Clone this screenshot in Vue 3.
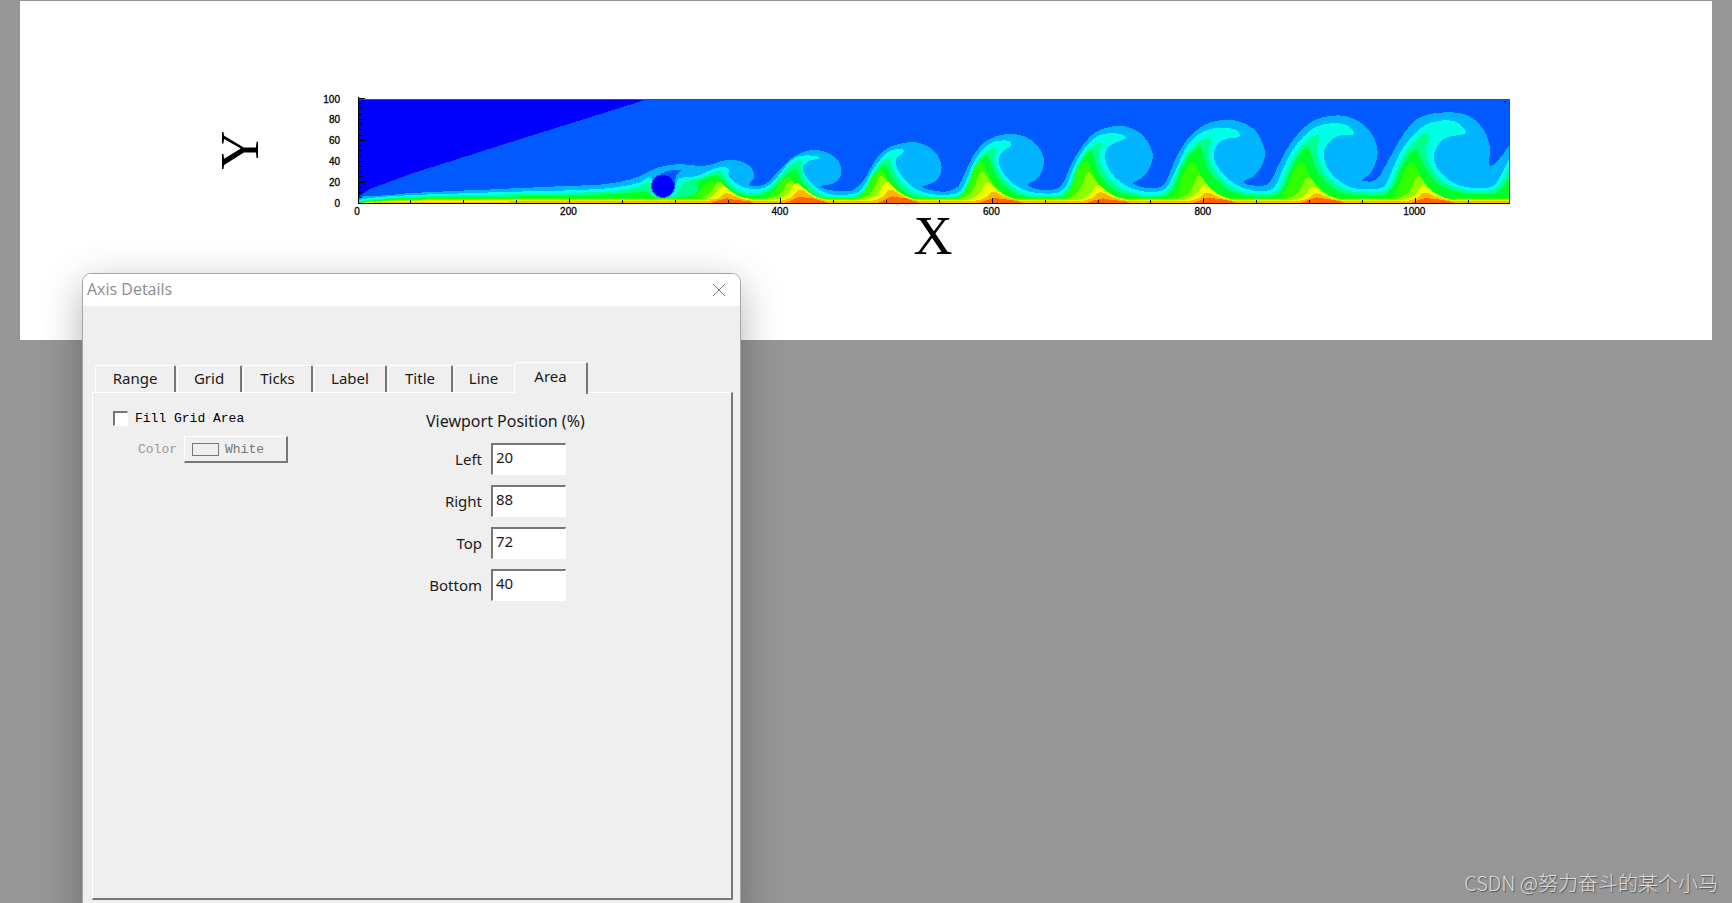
<script setup>
import { ref } from 'vue'

const tabs = ['Range', 'Grid', 'Ticks', 'Label', 'Title', 'Line', 'Area']
const active = ref('Area')
const fillArea = ref(false)
const fields = ref([
  { id: 'left', label: 'Left', value: '20' },
  { id: 'right', label: 'Right', value: '88' },
  { id: 'top', label: 'Top', value: '72' },
  { id: 'bottom', label: 'Bottom', value: '40' }
])

// Axis scales
const X0 = 358
const Y0 = 203
const sx = v => X0 + v * 1.0573
const sy = v => Y0 - v * 1.045
const xLabels = [0, 200, 400, 600, 800, 1000]
const yLabels = [0, 20, 40, 60, 80, 100]
const xTicks = Array.from({ length: 21 }, (_, i) => (i + 1) * 50)
const yTicks = Array.from({ length: 20 }, (_, i) => (i + 1) * 5)

// Contour points are stored in thirds of a unit, in four tiles along the channel
const origin = [600, 1590, 2550, 3540]
const pts = tiles => tiles.flatMap((t, i) => {
  const out = []
  for (let k = 0; k < t.length; k += 2) out.push([(origin[i] + t[k]) / 3, (240 + t[k + 1]) / 3])
  return out
})
const smooth = p => {
  let d = `M${p[0][0]} ${p[0][1]}`
  for (let i = 0; i < p.length - 1; i++) {
    const a = p[i - 1] || p[i], b = p[i], c = p[i + 1], e = p[i + 2] || c
    d += `C${b[0] + (c[0] - a[0]) / 6} ${b[1] + (c[1] - a[1]) / 6} ${c[0] - (e[0] - b[0]) / 6} ${c[1] - (e[1] - b[1]) / 6} ${c[0]} ${c[1]}`
  }
  return d
}
const layer = tiles => smooth(pts(tiles)) + 'V203H358Z'

const contours = [
  { color: '#00b4ff', d: layer([
    [477,354,500,348,560,346,620,340,700,336,780,332,860,329,940,325],
    [0,323,60,320,140,317,220,313,280,303,320,292,350,278,380,264,420,255,460,253,500,257,540,255,570,244,600,240,630,243,655,255,670,275,671,295,662,307,657,314,668,319,690,317,712,308,730,290,750,268,775,243,800,225,830,213,860,210,890,217,915,232,930,252,934,275,928,295,915,308,900,313,880,316,873,320,890,328,920,333,950,333],
    [5,332,20,322,40,302,60,268,80,235,105,210,135,195,175,187,210,189,240,203,262,225,274,255,272,280,262,298,245,310,222,318,222,324,245,331,275,335,300,332,325,318,342,285,360,245,380,212,405,186,440,168,485,162,525,170,555,190,575,217,582,245,575,275,560,298,540,308,532,315,545,322,570,329,605,330,630,320,648,290,665,250,690,208,720,170,750,150,790,139,830,140,865,155,890,180,905,210,908,235,900,262,885,285,865,300,848,308,860,316,885,323,915,325,940,315,955,290,975,240],
    [10,195,30,168,60,143,95,126,140,120,180,125,215,143,240,172,254,210,252,240,240,268,220,288,195,302,193,310,215,316,250,317,268,308,285,278,305,235,335,185,370,145,405,120,450,108,495,108,535,123,565,148,585,180,593,215,588,245,575,275,555,293,548,302,575,304,598,290,620,250,645,205,675,155,710,118,750,102,800,97,850,101,885,120,910,148,925,180,931,215,926,248,935,258,950,245,970,222,988,195]]) },
  { color: '#00ffe6', d: layer([
    [477,360,520,353,620,346,760,341,880,337],
    [0,334,120,331,220,326,290,317,330,307,355,292,372,300,430,300,455,293,500,288,530,275,560,264,580,261,597,268,595,285,612,305,640,321,675,328,705,322,730,305,752,278,775,250,795,234,825,226,862,230,865,236,840,242,822,255,820,275,832,295,855,320,885,338,920,345],
    [-10,344,15,340,30,332,50,305,68,270,90,240,115,215,150,206,160,210,158,220,140,235,138,255,150,280,170,305,195,325,235,341,280,344,320,340,340,320,355,285,372,245,395,212,425,188,465,181,483,187,480,200,455,217,447,240,452,265,468,290,495,315,535,334,590,341,625,337,648,318,662,285,680,243,705,203,740,170,780,159,820,165,826,175,805,185,775,200,765,225,770,252,785,280,810,305,845,325,895,336,935,332,955,315,975,275],
    [5,230,20,200,45,172,75,152,120,143,165,148,178,160,175,172,140,176,115,190,102,215,103,240,118,268,145,297,180,320,230,333,270,330,290,310,310,265,335,215,370,170,405,142,450,130,495,133,515,147,520,163,480,166,448,185,432,215,435,245,450,275,478,303,515,323,560,328,600,325,620,308,640,262,665,210,700,165,735,135,780,122,825,124,850,142,857,160,830,166,795,175,768,205,762,235,772,265,800,295,835,315,880,324,930,322,950,308,965,280,980,250,988,235]]) },
  { color: '#00ff8c', d: layer([
    [477,363,560,355,700,348,880,344],
    [0,342,150,338,260,332,320,322,350,310,365,318,372,340,400,352,432,345,450,325,465,305,500,297,530,287,560,274,578,278,588,298,610,320,645,337,680,339,710,330,735,308,758,280,780,257,800,245,818,245,812,262,822,290,845,322,880,347,930,352],
    [0,351,20,346,45,328,62,295,82,260,105,240,122,235,125,255,138,285,165,320,200,342,250,351,310,350,338,338,358,300,375,255,398,225,430,205,440,208,432,235,440,265,465,300,500,330,545,346,610,348,645,335,665,300,685,250,715,210,750,188,755,200,748,225,755,260,780,300,815,327,865,343,930,343,958,325,980,280],
    [10,240,35,205,65,180,90,172,92,190,85,220,95,255,120,293,160,325,215,341,265,341,298,325,320,275,345,225,380,182,415,165,417,180,410,215,420,255,450,298,495,328,550,337,605,335,632,315,655,260,685,205,720,168,748,162,745,185,738,215,750,255,780,297,830,325,890,334,940,330,965,305,988,262]]) },
  { color: '#00ff28', d: layer([
    [477,366,600,355,800,351],
    [0,349,200,344,300,338,345,335,370,350,400,358,445,352,490,345,505,325,495,308,520,298,555,285,572,290,590,315,620,338,660,347,700,342,735,320,760,293,785,272,800,268,808,290,830,325,865,350,920,358],
    [10,357,40,345,62,315,80,282,98,255,112,262,125,290,150,325,190,350,250,357,320,355,350,335,368,290,385,250,408,225,418,235,430,270,455,307,495,340,550,353,620,354,655,338,675,290,695,245,720,212,732,230,740,265,768,308,810,338,870,350,935,350,965,330,985,285],
    [15,245,35,218,60,198,70,225,80,260,110,302,155,335,215,349,270,349,305,330,328,280,350,235,378,202,395,225,405,260,435,305,485,337,550,346,615,343,642,315,660,270,685,230,708,208,722,235,740,270,775,312,830,335,895,343,945,340,970,318,988,295]]) }
]

// The hottest bands: a base level with one leaning bump for each vortex
const round = [[-88, 0], [-62, .1], [-44, .4], [-30, .78], [-14, .98], [0, 1], [14, .74], [30, .46], [52, .22], [78, .08], [108, 0]]
const pointed = [[-84, 0], [-56, .08], [-36, .26], [-22, .56], [-12, .92], [0, 1], [14, .76], [28, .52], [46, .28], [70, .1], [98, 0]]
const bumps = (base, profile, peaks) => {
  const p = [[1074, 369], [1300, base + 1]]
  for (const [x, y] of peaks) for (const [dx, k] of profile) {
    const nx = x + dx
    if (nx > p[p.length - 1][0]) p.push([nx, base - (base - y) * k])
  }
  p.push([4528, base])
  return smooth(p.map(([x, y]) => [x / 3, (y + 240) / 3])) + 'V203H358Z'
}
contours.push(
  { color: '#32ff00', d: bumps(354, round, [[2140,306],[2370,292],[2646,272],[2948,249],[3263,244],[3584,247],[3910,249],[4243,249]]) },
  { color: '#8cff00', d: bumps(357, pointed, [[2160,306],[2374,303],[2648,288],[2950,276],[3269,278],[3601,287],[3928,291],[4258,290]]) },
  { color: '#f0ff00', d: bumps(360, pointed, [[2172,318],[2394,308],[2664,306],[2968,308],[3298,316],[3616,314],[3944,320],[4274,318]]) },
  { color: '#ffb400', d: bumps(364, pointed, [[2184,340],[2404,329],[2676,329],[2984,335],[3306,337],[3626,338],[3954,340],[4280,338]]) }
)
const embers = [[2184,355],[2406,350],[2682,349],[2990,353],[3312,355],[3632,352],[3954,352],[4284,353]].map(([x, y]) => {
  const c = x / 3, t = (y + 240) / 3
  return `M${c - 18} 203L${c - 12} 201L${c - 5} ${t + 1}L${c - 1} ${t}L${c + 3} ${t + 1}L${c + 12} ${t + 2}L${c + 20} 201L${c + 26} 203Z`
})
</script>

<template>
  <main class="desktop">
    <section class="canvas">
      <svg class="plot" viewBox="20 1 1692 339" role="img" aria-label="Contour plot">
        <g shape-rendering="crispEdges">
          <rect x="358" y="100" width="1151" height="103" fill="#005aff" />
          <path d="M358 100H645L530 136L467 156L413 173L370 189L358 197Z" fill="#0000ff" />
          <path v-for="c in contours" :key="c.color" :d="c.d" :fill="c.color" />
          <path v-for="e in embers" :key="e" :d="e" fill="#ff6400" />
          <path d="M652 174C662 168 672 166 684 167L696 166L680 176L674 188L652 190Z" fill="#00b4ff" />
          <path d="M660 174C668 170 674 169 681 170L676 175L675 184L662 184Z" fill="#005aff" />
          <circle cx="663" cy="186" r="12" fill="#005aff" />
          <circle cx="663" cy="186" r="11" fill="#0000ff" />
          <path d="M1503 101H1506V104Z" fill="#0000b0" />
          <path d="M358 99.500H1509.500V203" fill="none" stroke="#a8203c" />
          <path d="M358.500 97V203.500H1510M358 98.500H365" fill="none" stroke="#000" />
          <line v-for="v in xTicks" :key="'tx' + v" :x1="sx(v)" :x2="sx(v)" y1="203" :y2="v % 200 ? 200 : 198" stroke="#000" />
          <line v-for="v in yTicks" :key="'ty' + v" x1="358" :x2="v % 20 ? 362 : 365" :y1="sy(v)" :y2="sy(v)" stroke="#000" />
        </g>
        <g class="ticks">
          <text v-for="v in xLabels" :key="'x' + v" :x="sx(v) - 1" y="215" text-anchor="middle">{{ v }}</text>
          <text v-for="v in yLabels" :key="'y' + v" x="340" :y="sy(v) + 4" text-anchor="end">{{ v }}</text>
        </g>
        <text class="axis" x="933" y="254" text-anchor="middle">X</text>
        <text class="axis" transform="translate(258 150) rotate(-90)" text-anchor="middle">Y</text>
      </svg>
    </section>

    <section class="dialog" role="dialog" aria-labelledby="dialog-title">
      <header class="titlebar">
        <h1 id="dialog-title">Axis Details</h1>
        <button class="close" type="button" aria-label="Close">
          <svg width="14" height="14" viewBox="0 0 14 14"><path d="M1 1L13 13M13 1L1 13" stroke="#777" fill="none" /></svg>
        </button>
      </header>
      <div class="body">
        <nav class="tabs" role="tablist">
          <button v-for="t in tabs" :key="t" type="button" role="tab" class="tab" :class="{ active: t === active }" :aria-selected="t === active" @click="active = t">{{ t }}</button>
        </nav>
        <div class="panel" role="tabpanel">
          <div class="fill">
            <label class="check"><input v-model="fillArea" type="checkbox" />Fill Grid Area</label>
            <div class="color">
              <span id="color-label">Color</span>
              <button class="picker" type="button" disabled aria-describedby="color-label"><span class="swatch"></span>White</button>
            </div>
          </div>
          <div class="viewport">
            <h2>Viewport Position (%)</h2>
            <div v-for="f in fields" :key="f.id" class="field">
              <label :for="f.id">{{ f.label }}</label>
              <input :id="f.id" v-model="f.value" type="text" />
            </div>
          </div>
        </div>
      </div>
    </section>

    <p class="credit">CSDN @努力奋斗的某个小马</p>
  </main>
</template>

<style>
body { background: #969696; }
</style>

<style scoped>
.desktop {
  position: relative;
  height: 100vh;
  box-sizing: border-box;
  padding: 0 20px;
  overflow: hidden;
  background: #969696;
  font-family: "Noto Sans", "Open Sans", sans-serif;
  font-size: 15px;
  color: #1a1a1a;
}
.canvas { background: #fff; border-top: 1px solid #969696; }
.plot { display: block; width: 100%; }
.ticks { font: 10px "Liberation Sans", sans-serif; fill: #000; stroke: #000; stroke-width: .3; }
.axis { font: 54px "Liberation Serif", serif; fill: #000; }

.dialog {
  position: absolute;
  left: 82px;
  top: 273px;
  bottom: -20px;
  width: 657px;
  display: flex;
  flex-direction: column;
  border: 1px solid #a6a6a6;
  border-radius: 9px;
  background: #efefef;
  overflow: hidden;
  box-shadow: 0 12px 40px rgba(0, 0, 0, .3);
}
.titlebar {
  display: flex;
  align-items: center;
  justify-content: space-between;
  height: 32px;
  padding: 0 14px 0 4px;
  background: #fff;
}
h1, h2 { margin: 0; font-size: 16px; font-weight: 400; }
h1 { padding-bottom: 2px; color: #8c8c8c; font-family: "Open Sans", sans-serif; }
button { font: inherit; color: inherit; }
.close { display: flex; padding: 0; border: 0; background: none; }
.body {
  flex: 1;
  display: flex;
  flex-direction: column;
  padding: 56px 7px 22px 9px;
}
.tabs {
  display: grid;
  grid-template-columns: 82px 66px 71px 74px 66px 61px 74px;
  align-items: end;
  height: 30px;
  padding-left: 2px;
  position: relative;
}
.tab {
  height: 27px;
  margin: 0 0 0 1px;
  padding: 0 0 2px;
  border: 1px solid #fff;
  border-width: 1px 2px 0 1px;
  border-right-color: #777;
  border-radius: 3px 2px 0 0;
  background: #efefef;
}
.tab:nth-child(6) { border-right-color: #efefef; }
.tab.active { height: 32px; margin: 0 0 -2px; padding-bottom: 5px; z-index: 1; }
.panel {
  flex: 1;
  display: grid;
  grid-template-columns: 313px 1fr;
  align-items: start;
  padding: 16px 0 0 20px;
  border: 1px solid #fff;
  border-right: 2px solid #777;
  border-bottom: 2px solid #777;
}
.fill { font: 13px "Liberation Mono", monospace; color: #000; }
.check { display: flex; align-items: center; gap: 7px; height: 19px; }
.check input {
  appearance: none;
  width: 15px;
  height: 15px;
  margin: 0;
  background: #fff;
  border: 2px solid #777;
  border-right: 1px solid #fff;
  border-bottom: 1px solid #fff;
}
.color { display: flex; align-items: center; gap: 7px; margin-top: 8px; padding-left: 25px; color: #999; }
.picker {
  display: flex;
  align-items: center;
  gap: 6px;
  width: 104px;
  height: 27px;
  padding: 0 0 0 7px;
  border: 1px solid #fff;
  border-right: 2px solid #777;
  border-bottom: 2px solid #777;
  background: #efefef;
  color: #777;
}
.swatch { width: 25px; height: 11px; border: 1px solid #777; }
.viewport { display: grid; gap: 10px; }
h2 { line-height: 24px; }
.field { display: grid; grid-template-columns: 56px 75px; column-gap: 9px; align-items: center; }
.field label { text-align: right; line-height: 20px; }
.field input {
  box-sizing: border-box;
  height: 32px;
  padding: 0 0 5px 3px;
  border: 2px solid #777;
  border-right: 1px solid #fff;
  border-bottom: 1px solid #fff;
  background: #fff;
  font: inherit;
  color: inherit;
}
.credit {
  position: absolute;
  right: 14px;
  bottom: 6px;
  margin: 0;
  font: 300 20px/29px "Noto Sans CJK SC", sans-serif;
  color: #dcdcdc;
  text-shadow: 1px 1px 1px #555;
}
</style>
